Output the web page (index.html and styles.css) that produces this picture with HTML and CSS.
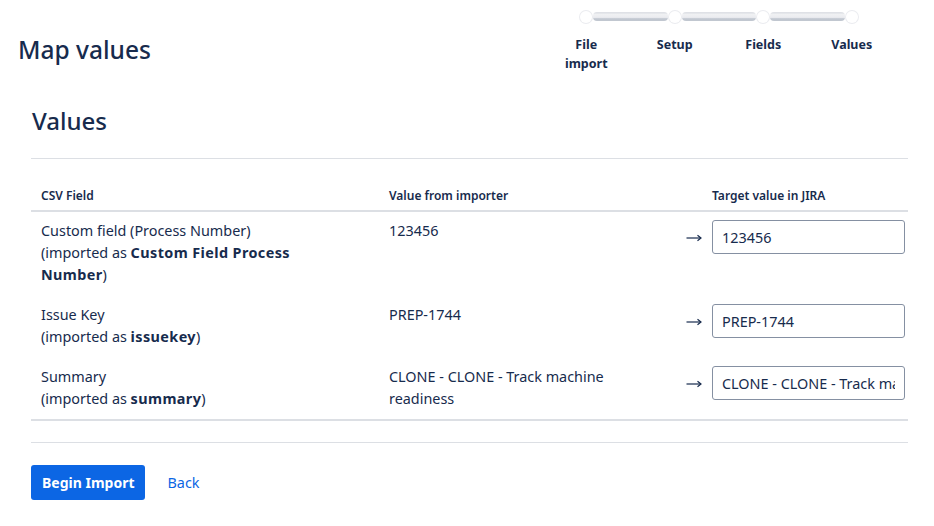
FILE: index.html
```html
<!DOCTYPE html>
<html lang="en">
<head>
<meta charset="utf-8">
<title>Map values</title>
<link rel="stylesheet" href="styles.css">
</head>
<body>
<header class="page-header">
  <h1 class="page-title">Map values</h1>
  <ol class="stepper">
    <li class="step"><span class="step-track"></span><span class="step-label">File import</span></li>
    <li class="step"><span class="step-track"></span><span class="step-label">Setup</span></li>
    <li class="step"><span class="step-track"></span><span class="step-label">Fields</span></li>
    <li class="step step-last"><span class="step-track"></span><span class="step-label">Values</span></li>
  </ol>
</header>
<main class="content">
  <h2 class="section-title">Values</h2>
  <hr class="divider">
  <table class="map-table">
    <colgroup>
      <col class="c-field"><col class="c-value"><col class="c-arrow"><col class="c-target">
    </colgroup>
    <thead>
      <tr><th>CSV Field</th><th>Value from importer</th><th></th><th>Target value in JIRA</th></tr>
    </thead>
    <tbody>
      <tr>
        <td>Custom field (Process Number)<br>(imported as <b>Custom Field Process Number</b>)</td>
        <td>123456</td>
        <td class="arrow"><svg class="arrow-icon" width="16" height="8" viewBox="0 0 16 8" aria-label="maps to"><path d="M0.5 4H14.5" stroke="#172b4d" stroke-width="1.2" fill="none"/><path d="M11.5 1.2L15 4L11.5 6.8" stroke="#172b4d" stroke-width="1.2" fill="none"/></svg></td>
        <td><input class="target-input" type="text" value="123456"></td>
      </tr>
      <tr class="row-mid">
        <td>Issue Key<br>(imported as <b>issuekey</b>)</td>
        <td>PREP-1744</td>
        <td class="arrow"><svg class="arrow-icon" width="16" height="8" viewBox="0 0 16 8" aria-label="maps to"><path d="M0.5 4H14.5" stroke="#172b4d" stroke-width="1.2" fill="none"/><path d="M11.5 1.2L15 4L11.5 6.8" stroke="#172b4d" stroke-width="1.2" fill="none"/></svg></td>
        <td><input class="target-input" type="text" value="PREP-1744"></td>
      </tr>
      <tr>
        <td>Summary<br>(imported as <b>summary</b>)</td>
        <td>CLONE - CLONE - Track machine readiness</td>
        <td class="arrow"><svg class="arrow-icon" width="16" height="8" viewBox="0 0 16 8" aria-label="maps to"><path d="M0.5 4H14.5" stroke="#172b4d" stroke-width="1.2" fill="none"/><path d="M11.5 1.2L15 4L11.5 6.8" stroke="#172b4d" stroke-width="1.2" fill="none"/></svg></td>
        <td><input class="target-input" type="text" value="CLONE - CLONE - Track machine readiness"></td>
      </tr>
    </tbody>
  </table>
  <hr class="divider divider-bottom">
  <div class="actions">
    <button class="btn-primary" type="button">Begin Import</button>
    <a class="link-back" href="#">Back</a>
  </div>
</main>
</body>
</html>
```
FILE: styles.css
```css
* { box-sizing: border-box; }
html, body { margin: 0; padding: 0; background: #fff; }
body {
  font-family: "Noto Sans", "Open Sans", sans-serif;
  color: #172b4d;
  font-size: 14.4px;
}
.page-header {
  display: flex;
  justify-content: space-between;
  align-items: flex-start;
  padding-left: 18px;
  padding-right: 38px;
  height: 73px;
}
.page-title {
  margin: 35px 0 0 0;
  font-size: 24.5px;
  line-height: 30px;
  font-weight: 500;
}
.stepper {
  list-style: none;
  margin: 11px 0 0 0;
  padding: 0;
  display: grid;
  grid-template-columns: repeat(4, 88.5px);
}
.step {
  position: relative;
  display: flex;
  flex-direction: column;
  align-items: center;
}
.step-track {
  position: relative;
  width: 100%;
  height: 12px;
}
.step-track::before {
  content: "";
  position: absolute;
  left: calc(50% + 7px);
  top: 1px;
  width: calc(100% - 14px);
  height: 9px;
  border-radius: 4px;
  background: linear-gradient(#dfe1e6 0, #dfe1e6 12%, #f0f1f3 25%, #ebecf0 60%, #c1c7d0 75%, #c1c7d0 100%);
}
.step-last .step-track::before { display: none; }
.step-track::after {
  content: "";
  position: absolute;
  left: calc(50% - 6px);
  top: 0;
  width: 12px;
  height: 12px;
  border-radius: 50%;
  background: #fff;
  box-shadow: 0 0 0 1px #ebecf0;
}
.step-label {
  margin-top: 12px;
  width: 62px;
  text-align: center;
  font-size: 12.5px;
  line-height: 19px;
  font-weight: 700;
}
.content {
  margin: 0 26px 0 31px;
}
.section-title {
  margin: 33px 0 0 1px;
  font-size: 24px;
  line-height: 30px;
  font-weight: 500;
}
.divider {
  border: 0;
  height: 1px;
  background: #dcdfe4;
  margin: 22px 0 0 0;
}
.map-table {
  margin-top: 20px;
  width: 100%;
  border-collapse: collapse;
  table-layout: fixed;
  border-bottom: 2px solid #dcdfe4;
}
.c-field { width: 348px; }
.c-value { width: 299px; }
.c-arrow { width: 24px; }
.map-table th {
  text-align: left;
  font-size: 12px;
  line-height: 16px;
  font-weight: 600;
  padding: 9px 10px 6px 10px;
  border-bottom: 2px solid #dcdfe4;
}
.map-table td {
  vertical-align: top;
  padding: 8px 14px 9px 10px;
  line-height: 22px;
}
.map-table .row-mid td { padding-top: 9px; padding-bottom: 10px; }
.map-table td:first-child { padding-right: 44px; }
.map-table td:nth-child(2) { padding-right: 20px; }
.map-table th:nth-child(3), .map-table td.arrow { padding-left: 0; padding-right: 0; }
.map-table th:nth-child(4), .map-table td:nth-child(4) { padding-left: 10px; padding-right: 0; }
.map-table td.arrow {
  padding-left: 8px;
  padding-top: 22px;
  line-height: 0;
}
.map-table .row-mid td.arrow { padding-top: 23px; }
.arrow-icon { display: block; }
.map-table b { font-weight: 700; letter-spacing: 0.4px; }
.target-input {
  display: block;
  width: 193px;
  height: 34px;
  border: 1px solid #8590a2;
  border-radius: 3px;
  padding: 0 9px;
  font: inherit;
  font-size: 14.4px;
  color: #172b4d;
  background: #fff;
}
.divider-bottom { margin-top: 21px; }
.actions {
  display: flex;
  align-items: center;
  gap: 22px;
  margin-top: 22px;
}
.btn-primary {
  height: 35px;
  padding: 0 11px;
  border: 0;
  border-radius: 3px;
  background: #0c66e4;
  color: #fff;
  font: inherit;
  font-size: 14px;
  font-weight: 700;
}
.link-back {
  color: #0c66e4;
  text-decoration: none;
  font-size: 14.4px;
}
```
